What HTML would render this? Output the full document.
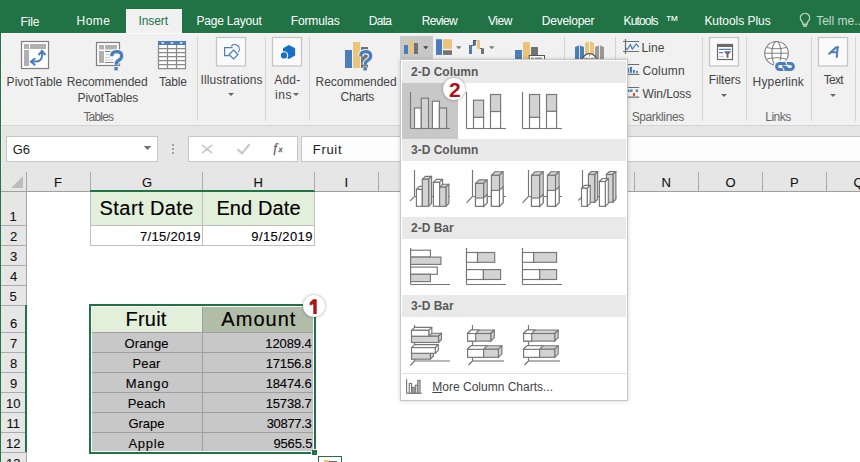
<!DOCTYPE html>
<html><head><meta charset="utf-8">
<style>
*{margin:0;padding:0;box-sizing:border-box}
html,body{width:860px;height:462px;overflow:hidden;background:#fff;font-family:"Liberation Sans",sans-serif}
.a{position:absolute}
.t{position:absolute;white-space:nowrap;line-height:1}
.tab{position:absolute;color:#fff;font-size:12px;white-space:nowrap;line-height:12px}
.rl{position:absolute;color:#444;font-size:12px;white-space:nowrap;line-height:12px}
.gl{position:absolute;color:#666;font-size:12px;white-space:nowrap;line-height:12px}
.sep{position:absolute;width:1px;background:#d4d4d4;top:37px;height:84px}
.hl{font-size:13px;color:#222;text-align:center}
.rl2{font-size:13px;color:#222;text-align:center}
.dd{position:absolute;font-weight:bold;font-size:12px;color:#555;line-height:12px;white-space:nowrap}
.band{position:absolute;left:402px;width:224px;height:22px;background:#e9e9e9}
svg{position:absolute;overflow:visible}
</style></head><body>
<div class="a" style="left:0;top:0;width:860px;height:33px;background:#217346"></div>
<div class="a" style="left:126px;top:9px;width:56px;height:24px;background:#f1f1f1"></div>
<div class="t" style="left:20.50px;top:16px;font-size:12px;color:#fff;letter-spacing:-0.100px">File</div>
<div class="t" style="left:76.50px;top:15px;font-size:12px;color:#fff;letter-spacing:0.500px">Home</div>
<div class="t" style="left:138.40px;top:15px;font-size:12px;color:#217346;letter-spacing:-0.080px">Insert</div>
<div class="t" style="left:196.50px;top:15px;font-size:12px;color:#fff;letter-spacing:-0.200px">Page Layout</div>
<div class="t" style="left:290.80px;top:15px;font-size:12px;color:#fff;letter-spacing:-0.143px">Formulas</div>
<div class="t" style="left:368.80px;top:15px;font-size:12px;color:#fff;letter-spacing:-0.700px">Data</div>
<div class="t" style="left:421.80px;top:15px;font-size:12px;color:#fff;letter-spacing:-0.680px">Review</div>
<div class="t" style="left:488.00px;top:15px;font-size:12px;color:#fff;letter-spacing:-0.467px">View</div>
<div class="t" style="left:541.80px;top:15px;font-size:12px;color:#fff;letter-spacing:-0.250px">Developer</div>
<div class="t" style="left:623.50px;top:15px;font-size:12px;color:#fff;letter-spacing:-0.833px">Kutools</div>
<div class="t" style="left:704.40px;top:15px;font-size:12px;color:#fff;letter-spacing:-0.036px">Kutools Plus</div>
<div class="t" style="left:665.40px;top:14px;font-size:13px;color:#fff;transform:scaleX(1.0);transform-origin:left">&#8482;</div>
<div class="t" style="left:816.20px;top:15px;font-size:12px;color:#c3d9c9">Tell me...</div>
<svg style="left:798px;top:12px" width="14" height="16"><path d="M5 12.2 Q4.8 10.2 3.4 8.8 A4.6 4.6 0 1 1 10.6 8.8 Q9.2 10.2 9 12.2Z" fill="none" stroke="#bcd2c2" stroke-width="1.4"/><rect x="5" y="13.2" width="4" height="1.6" fill="#bcd2c2"/></svg>
<div class="a" style="left:0;top:33px;width:860px;height:93px;background:#f1f1f1;border-bottom:1px solid #d5d5d5"></div>
<div class="sep" style="left:197px"></div>
<div class="sep" style="left:265px"></div>
<div class="sep" style="left:309px"></div>
<div class="sep" style="left:564px"></div>
<div class="sep" style="left:615px"></div>
<div class="sep" style="left:702px"></div>
<div class="sep" style="left:746px"></div>
<div class="sep" style="left:811px"></div>
<div class="sep" style="left:855px"></div>
<div class="t" style="left:6.60px;top:76px;font-size:12px;color:#444;letter-spacing:0.033px">PivotTable</div>
<div class="t" style="left:66.70px;top:76px;font-size:12px;color:#444;letter-spacing:-0.040px">Recommended</div>
<div class="t" style="left:77.50px;top:92px;font-size:12px;color:#444;letter-spacing:-0.050px">PivotTables</div>
<div class="t" style="left:159.00px;top:76px;font-size:12px;color:#444;letter-spacing:-0.200px">Table</div>
<div class="t" style="left:83.40px;top:111px;font-size:12px;color:#666;letter-spacing:-0.800px">Tables</div>
<div class="t" style="left:200.60px;top:74px;font-size:12px;color:#444;letter-spacing:0.100px">Illustrations</div>
<div class="t" style="left:274.20px;top:74px;font-size:12px;color:#444;letter-spacing:0.200px">Add-</div>
<div class="t" style="left:275.10px;top:89px;font-size:12px;color:#444;letter-spacing:0.500px">ins</div>
<div class="t" style="left:315.50px;top:76px;font-size:12px;color:#444;letter-spacing:-0.020px">Recommended</div>
<div class="t" style="left:340.60px;top:91px;font-size:12px;color:#444;letter-spacing:-0.360px">Charts</div>
<div class="t" style="left:641.50px;top:42px;font-size:12px;color:#444;letter-spacing:0.067px">Line</div>
<div class="t" style="left:642.50px;top:65px;font-size:12px;color:#444;letter-spacing:0.140px">Column</div>
<div class="t" style="left:642.50px;top:88px;font-size:12px;color:#444;letter-spacing:-0.086px">Win/Loss</div>
<div class="t" style="left:631.70px;top:111px;font-size:12px;color:#666;letter-spacing:-0.389px">Sparklines</div>
<div class="t" style="left:708.70px;top:74px;font-size:12px;color:#444;letter-spacing:-0.117px">Filters</div>
<div class="t" style="left:752.60px;top:76px;font-size:12px;color:#444;letter-spacing:0.150px">Hyperlink</div>
<div class="t" style="left:765.20px;top:111px;font-size:12px;color:#666;letter-spacing:-0.475px">Links</div>
<div class="t" style="left:823.70px;top:74px;font-size:12px;color:#444;letter-spacing:-0.700px">Text</div>
<svg style="left:228px;top:93px" width="6" height="3"><path d="M0 0H6L3 3Z" fill="#666"/></svg>
<svg style="left:293px;top:93px" width="6" height="3"><path d="M0 0H6L3 3Z" fill="#666"/></svg>
<svg style="left:721px;top:94px" width="6" height="3"><path d="M0 0H6L3 3Z" fill="#666"/></svg>
<svg style="left:830px;top:94px" width="6" height="3"><path d="M0 0H6L3 3Z" fill="#666"/></svg>
<div class="a" style="left:400px;top:36px;width:33px;height:25px;background:#c8c8c8"></div>
<svg style="left:0;top:0" width="860" height="462"><rect x="21.5" y="41.5" width="27" height="27" fill="#fff" stroke="#7f7f7f" stroke-width="1.2"/><rect x="24" y="44" width="5" height="5" fill="#b0b0b0"/><rect x="30" y="44" width="16" height="5" fill="#b0b0b0"/><rect x="24" y="50" width="5" height="16" fill="#b0b0b0"/><path d="M31 61.6 H36 A6 5.6 0 0 0 42 56 V51" fill="none" stroke="#4a7ebb" stroke-width="2"/><path d="M35.2 58.2 L31 61.7 L35.2 65.2" fill="none" stroke="#4a7ebb" stroke-width="2"/><path d="M38.5 55.2 L42 50.8 L45.5 55.2" fill="none" stroke="#4a7ebb" stroke-width="2"/><rect x="96.5" y="42.5" width="23" height="23" fill="#fff" stroke="#7f7f7f" stroke-width="1.2"/><rect x="99" y="45" width="5" height="4.5" fill="#b0b0b0"/><rect x="105" y="45" width="12" height="4.5" fill="#b0b0b0"/><rect x="99" y="51" width="5" height="12" fill="#b0b0b0"/><path d="M105 51.5H111M105 62.5H114" stroke="#7f7f7f" stroke-width="1"/><path d="M105 54.5H110M105 57.5H110M105 60H113" stroke="#c8c8c8" stroke-width="1.2"/><path d="M111.69999999999999 56.300000000000004 Q111.69999999999999 51.6 116.69999999999999 51.6 Q121.69999999999999 51.6 121.69999999999999 55.900000000000006 Q121.69999999999999 58.7 118.5 60.5 Q116.19999999999999 61.800000000000004 116.19999999999999 64.7" fill="none" stroke="#f1f1f1" stroke-width="5.5"/><rect x="113.8" y="66.4" width="4.6" height="4.6" fill="#f1f1f1"/><path d="M111.69999999999999 56.300000000000004 Q111.69999999999999 51.6 116.69999999999999 51.6 Q121.69999999999999 51.6 121.69999999999999 55.900000000000006 Q121.69999999999999 58.7 118.5 60.5 Q116.19999999999999 61.800000000000004 116.19999999999999 64.7" fill="none" stroke="#4a7ebb" stroke-width="3.2"/><rect x="114.39999999999999" y="67.0" width="3.4" height="3.4" fill="#4a7ebb"/><rect x="158" y="44" width="28" height="25" fill="#fff"/><path d="M158.5 44V69M167.5 45V69M176.5 45V69M185.5 44V69M158 48.5H186M158 52.5H186M158 56.5H186M158 60.5H186M158 64.5H186M158 68.5H186" stroke="#8a8a8a" stroke-width="1.25"/><rect x="158" y="41" width="28" height="4" fill="#4a7ebb"/><path d="M161.0 42.3H164.60000000000002L162.8 44.2Z" fill="#fff"/><path d="M170.1 42.3H173.70000000000002L171.9 44.2Z" fill="#fff"/><path d="M179.29999999999998 42.3H182.9L181.1 44.2Z" fill="#fff"/><rect x="216.5" y="37.5" width="29" height="28.5" fill="#fafafa" stroke="#c6c6c6" stroke-width="1.3"/><path d="M232.6 47.6H224.6V55.6H229" fill="none" stroke="#4a7ebb" stroke-width="1.2"/><path d="M231.2 46.2 A4.6 4.6 0 1 1 238.2 52.2" fill="none" stroke="#4a7ebb" stroke-width="1.2"/><path d="M233.5 50 L238 54.5 L233.5 59 L229 54.5Z" fill="none" stroke="#4a7ebb" stroke-width="1.2"/><rect x="272.5" y="37.5" width="29" height="28.5" fill="#fafafa" stroke="#c6c6c6" stroke-width="1.3"/><path d="M288.9 44.9 L295.1 48.2 V55.6 L288.9 58.9 L283 56 V48.2Z" fill="#1a6fc9"/><circle cx="284" cy="55.4" r="4.2" fill="#fafafa"/><circle cx="284" cy="55.4" r="3.1" fill="#1a6fc9"/><rect x="345" y="50" width="7" height="18" fill="#4a7ebb"/><rect x="353" y="42" width="7" height="26" fill="#eac47a"/><rect x="361" y="47" width="7" height="21" fill="#737373"/><path d="M360.70000000000005 56.4 Q360.70000000000005 51.699999999999996 365.70000000000005 51.699999999999996 Q370.70000000000005 51.699999999999996 370.70000000000005 56.0 Q370.70000000000005 58.8 367.5 60.599999999999994 Q365.20000000000005 61.9 365.20000000000005 64.8" fill="none" stroke="#f1f1f1" stroke-width="5.5"/><rect x="362.8" y="66.5" width="4.6" height="4.6" fill="#f1f1f1"/><path d="M360.70000000000005 56.4 Q360.70000000000005 51.699999999999996 365.70000000000005 51.699999999999996 Q370.70000000000005 51.699999999999996 370.70000000000005 56.0 Q370.70000000000005 58.8 367.5 60.599999999999994 Q365.20000000000005 61.9 365.20000000000005 64.8" fill="none" stroke="#4a7ebb" stroke-width="3.2"/><rect x="363.40000000000003" y="67.1" width="3.4" height="3.4" fill="#4a7ebb"/><rect x="404" y="45" width="4" height="9" fill="#4a7ebb"/><rect x="409" y="40" width="4" height="14" fill="#eac47a"/><rect x="414" y="43" width="4" height="11" fill="#737373"/><path d="M423 46.3H428.5L425.75 49.2Z" fill="#444"/><rect x="436" y="39.2" width="6" height="15.7" fill="#4a7ebb"/><rect x="443" y="39.2" width="9" height="9.7" fill="#eac47a"/><rect x="443" y="50.3" width="9" height="4.6" fill="#737373"/><path d="M456 46.3H461.5L458.75 49.2Z" fill="#777"/><rect x="469" y="45" width="3" height="9" fill="#4a7ebb"/><rect x="473" y="40" width="3" height="5.6" fill="#4a7ebb"/><rect x="477" y="40" width="3" height="8.9" fill="#eac47a"/><rect x="481" y="48.2" width="3" height="5.8" fill="#737373"/><path d="M471.5 45.5H473.5V40.5H476.5M480 48.5H481.5" fill="none" stroke="#444" stroke-width="0.8"/><path d="M489 46.3H494.5L491.75 49.2Z" fill="#777"/><rect x="515" y="50" width="7" height="10" fill="#4a7ebb"/><rect x="523" y="42" width="7" height="18" fill="#eac47a"/><rect x="531" y="47" width="7" height="8" fill="#737373"/><rect x="529.2" y="55.5" width="15.3" height="6" fill="#fff" stroke="#555" stroke-width="1"/><rect x="531" y="57.5" width="3" height="2" fill="#999"/><rect x="535" y="57.5" width="7" height="2" fill="#999"/><path d="M575 47L579.5 45.2L584 47V60H575Z" fill="#4a7ebb"/><path d="M579.5 45.2V60" stroke="#fff" stroke-width="0.8"/><path d="M585 43L589.5 41L594 43V60H585Z" fill="#eac47a"/><path d="M589.5 41V60" stroke="#fff" stroke-width="0.8"/><path d="M595 47L599.5 45.2L604 47V60H595Z" fill="#999"/><path d="M599.5 45.2V60" stroke="#fff" stroke-width="0.8"/><path d="M582 61.5A7.5 7.8 0 0 1 597 61.5" fill="#fff" stroke="#555" stroke-width="1.3"/><path d="M584 58.3H595M589.5 54.5V61" stroke="#777" stroke-width="0.9"/><path d="M587.8 58.2L589.5 56.2L591.2 58.2Z" fill="#fff"/><path d="M625.5 39V54M623 41.5H639M623 51.5H639" stroke="#6e6e6e" stroke-width="1.2"/><path d="M626 47.8L627.3 49.5L630.4 44.5L632.3 49L636.3 44L638.8 47.2" fill="none" stroke="#4a7ebb" stroke-width="1.2"/><path d="M627 64.5H639.2M627 74.3H639.2" stroke="#6e6e6e" stroke-width="1.2"/><rect x="627.9" y="68" width="1.2" height="4.8" fill="#4a7ebb"/><rect x="629.9" y="66.9" width="2.2" height="5.9" fill="#4a7ebb"/><rect x="633" y="70" width="2" height="2.8" fill="#4a7ebb"/><rect x="636" y="71" width="2" height="1.8" fill="#4a7ebb"/><path d="M627 87.5H639.2M627 97.2H639.2" stroke="#6e6e6e" stroke-width="1.2"/><rect x="627.5" y="89.5" width="2" height="2.5" fill="#4a7ebb"/><rect x="630.2" y="89.5" width="2.3" height="2.5" fill="#4a7ebb"/><rect x="635.8" y="89.5" width="2.2" height="2.5" fill="#4a7ebb"/><rect x="633" y="93" width="2" height="3" fill="#d9472b"/><rect x="709.5" y="37.5" width="29" height="28.5" fill="#fafafa" stroke="#c6c6c6" stroke-width="1.3"/><rect x="717.5" y="44.5" width="15" height="15" fill="#fff" stroke="#6b6b6b" stroke-width="1.2"/><rect x="717" y="44" width="16" height="3" fill="#6b6b6b"/><path d="M719 49.3H731M719 52.7H723" stroke="#4a7ebb" stroke-width="1.3"/><path d="M719 56.5H724" stroke="#b8cde6" stroke-width="1.3"/><path d="M723.8 51.2H731.2L728.5 54.5V57.8H726.5V54.5Z" fill="#6b6b6b"/><circle cx="776.5" cy="53.3" r="11.8" fill="#fff" stroke="#808080" stroke-width="1.1"/><ellipse cx="776.5" cy="53.3" rx="4.6" ry="11.8" fill="none" stroke="#808080" stroke-width="1.1"/><path d="M765 53.3H788M767 47.5Q776.5 50 786 47.5M767 59Q776.5 56.5 786 59" fill="none" stroke="#808080" stroke-width="1.1"/><rect x="773.5" y="60.5" width="23" height="12" rx="6" fill="#f1f1f1"/><rect x="776.6" y="63.5" width="16.8" height="6" rx="3" fill="none" stroke="#4a7ebb" stroke-width="3"/><path d="M785.3 61.5L787.8 65.8M782.2 67.2L784.7 71.5" stroke="#f1f1f1" stroke-width="1.1"/><path d="M782.3 66.2L787.7 67.8" stroke="#4a7ebb" stroke-width="2.4"/><rect x="818.5" y="37.5" width="29" height="28.5" fill="#fafafa" stroke="#c6c6c6" stroke-width="1.3"/><path d="M829.2 53.8 L836.2 47.2 H838.2 M837.6 47.4 L836.8 57 M831.6 52.3 H836.9" fill="none" stroke="#4a7ebb" stroke-width="2" stroke-linecap="round" stroke-linejoin="round"/></svg>
<div class="a" style="left:1px;top:126px;width:859px;height:46px;background:#e6e6e6"></div>
<div class="a" style="left:6px;top:136px;width:152px;height:26px;background:#fff;border:1px solid #c6c6c6"></div>
<div class="t" style="left:12.70px;top:143px;font-size:13px;color:#222">G6</div>
<svg style="left:0;top:0" width="860" height="462"><path d="M143.8 146H151.2L147.5 150Z" fill="#707070"/><rect x="172" y="144" width="2" height="2" fill="#a3a3a3"/><rect x="172" y="148" width="2" height="2" fill="#a3a3a3"/><rect x="172" y="152" width="2" height="2" fill="#a3a3a3"/></svg>
<div class="a" style="left:188px;top:136px;width:110px;height:26px;background:#fff;border:1px solid #c6c6c6"></div>
<svg style="left:0;top:0" width="860" height="462"><path d="M202.5 145.3L211.6 152.7M211.6 145.3L202.5 152.7" stroke="#c8c8c8" stroke-width="1.7" stroke-linecap="round"/><path d="M238.2 149.8L242 153.4L249 145" stroke="#c8c8c8" stroke-width="2.2" fill="none" stroke-linecap="round" stroke-linejoin="round"/></svg>
<div class="t" style="left:273.60px;top:142px;font-size:12px;color:#5a5a5a;font-family:'Liberation Serif';font-style:italic;-webkit-text-stroke:0.3px #5a5a5a">f</div>
<div class="t" style="left:278.40px;top:145px;font-size:9px;color:#5a5a5a;font-family:'Liberation Serif';font-style:italic;-webkit-text-stroke:0.3px #5a5a5a">x</div>
<div class="a" style="left:301px;top:136px;width:580px;height:26px;background:#fdfdfd;border:1px solid #c6c6c6"></div>
<div class="t" style="left:312.80px;top:143px;font-size:13px;color:#222;letter-spacing:0.675px">Fruit</div>
<div class="a" style="left:1px;top:172px;width:859px;height:20px;background:#e6e6e6;border-bottom:1px solid #a0a0a0"></div>
<svg style="left:11px;top:176px" width="13" height="12"><path d="M0 12L12 0V12Z" fill="#bdbdbd"/></svg>
<div class="a" style="left:26px;top:172px;width:1px;height:19px;background:#ababab"></div>
<div class="t" style="left:54.00px;top:176px;font-size:13px;color:#111;-webkit-text-stroke:0.1px #111">F</div>
<div class="a" style="left:90px;top:172px;width:1px;height:19px;background:#ababab"></div>
<div class="a" style="left:90px;top:190px;width:113px;height:2px;background:#217346"></div>
<div class="t" style="left:142.00px;top:176px;font-size:13px;color:#111;-webkit-text-stroke:0.1px #111">G</div>
<div class="a" style="left:202px;top:172px;width:1px;height:19px;background:#ababab"></div>
<div class="a" style="left:202px;top:190px;width:113px;height:2px;background:#217346"></div>
<div class="t" style="left:253.50px;top:176px;font-size:13px;color:#111;-webkit-text-stroke:0.1px #111">H</div>
<div class="a" style="left:314px;top:172px;width:1px;height:19px;background:#ababab"></div>
<div class="t" style="left:344.50px;top:176px;font-size:13px;color:#111;-webkit-text-stroke:0.1px #111">I</div>
<div class="a" style="left:378px;top:172px;width:1px;height:19px;background:#ababab"></div>
<div class="t" style="left:407.50px;top:176px;font-size:13px;color:#111;-webkit-text-stroke:0.1px #111">J</div>
<div class="a" style="left:442px;top:172px;width:1px;height:19px;background:#ababab"></div>
<div class="t" style="left:470.00px;top:176px;font-size:13px;color:#111;-webkit-text-stroke:0.1px #111">K</div>
<div class="a" style="left:506px;top:172px;width:1px;height:19px;background:#ababab"></div>
<div class="t" style="left:534.50px;top:176px;font-size:13px;color:#111;-webkit-text-stroke:0.1px #111">L</div>
<div class="a" style="left:570px;top:172px;width:1px;height:19px;background:#ababab"></div>
<div class="t" style="left:597.00px;top:176px;font-size:13px;color:#111;-webkit-text-stroke:0.1px #111">M</div>
<div class="a" style="left:634px;top:172px;width:1px;height:19px;background:#ababab"></div>
<div class="t" style="left:661.50px;top:176px;font-size:13px;color:#111;-webkit-text-stroke:0.1px #111">N</div>
<div class="a" style="left:698px;top:172px;width:1px;height:19px;background:#ababab"></div>
<div class="t" style="left:725.50px;top:176px;font-size:13px;color:#111;-webkit-text-stroke:0.1px #111">O</div>
<div class="a" style="left:762px;top:172px;width:1px;height:19px;background:#ababab"></div>
<div class="t" style="left:790.00px;top:176px;font-size:13px;color:#111;-webkit-text-stroke:0.1px #111">P</div>
<div class="a" style="left:826px;top:172px;width:1px;height:19px;background:#ababab"></div>
<div class="t" style="left:853.50px;top:176px;font-size:13px;color:#111;-webkit-text-stroke:0.1px #111">Q</div>
<div class="a" style="left:1px;top:192px;width:25px;height:34px;background:#e6e6e6;border-bottom:1px solid #ababab"></div>
<div class="t" style="left:9.60px;top:210px;font-size:13px;color:#111;-webkit-text-stroke:0.1px #111">1</div>
<div class="a" style="left:1px;top:226px;width:25px;height:20px;background:#e6e6e6;border-bottom:1px solid #ababab"></div>
<div class="t" style="left:10.10px;top:230px;font-size:13px;color:#111;-webkit-text-stroke:0.1px #111">2</div>
<div class="a" style="left:1px;top:246px;width:25px;height:20px;background:#e6e6e6;border-bottom:1px solid #ababab"></div>
<div class="t" style="left:10.10px;top:250px;font-size:13px;color:#111;-webkit-text-stroke:0.1px #111">3</div>
<div class="a" style="left:1px;top:266px;width:25px;height:20px;background:#e6e6e6;border-bottom:1px solid #ababab"></div>
<div class="t" style="left:10.10px;top:270px;font-size:13px;color:#111;-webkit-text-stroke:0.1px #111">4</div>
<div class="a" style="left:1px;top:286px;width:25px;height:20px;background:#e6e6e6;border-bottom:1px solid #ababab"></div>
<div class="t" style="left:9.60px;top:290px;font-size:13px;color:#111;-webkit-text-stroke:0.1px #111">5</div>
<div class="a" style="left:1px;top:306px;width:25px;height:27px;background:#e6e6e6;border-bottom:1px solid #ababab"></div>
<div class="t" style="left:10.10px;top:317px;font-size:13px;color:#111;-webkit-text-stroke:0.1px #111">6</div>
<div class="a" style="left:1px;top:333px;width:25px;height:20px;background:#e6e6e6;border-bottom:1px solid #ababab"></div>
<div class="t" style="left:10.10px;top:337px;font-size:13px;color:#111;-webkit-text-stroke:0.1px #111">7</div>
<div class="a" style="left:1px;top:353px;width:25px;height:20px;background:#e6e6e6;border-bottom:1px solid #ababab"></div>
<div class="t" style="left:10.10px;top:357px;font-size:13px;color:#111;-webkit-text-stroke:0.1px #111">8</div>
<div class="a" style="left:1px;top:373px;width:25px;height:20px;background:#e6e6e6;border-bottom:1px solid #ababab"></div>
<div class="t" style="left:10.10px;top:377px;font-size:13px;color:#111;-webkit-text-stroke:0.1px #111">9</div>
<div class="a" style="left:1px;top:393px;width:25px;height:20px;background:#e6e6e6;border-bottom:1px solid #ababab"></div>
<div class="t" style="left:6.10px;top:397px;font-size:13px;color:#111;-webkit-text-stroke:0.1px #111">10</div>
<div class="a" style="left:1px;top:413px;width:25px;height:20px;background:#e6e6e6;border-bottom:1px solid #ababab"></div>
<div class="t" style="left:6.60px;top:417px;font-size:13px;color:#111;-webkit-text-stroke:0.1px #111">11</div>
<div class="a" style="left:1px;top:433px;width:25px;height:20px;background:#e6e6e6;border-bottom:1px solid #ababab"></div>
<div class="t" style="left:6.10px;top:437px;font-size:13px;color:#111;-webkit-text-stroke:0.1px #111">12</div>
<div class="a" style="left:1px;top:453px;width:25px;height:20px;background:#e6e6e6;border-bottom:1px solid #ababab"></div>
<div class="t" style="left:6.10px;top:457px;font-size:13px;color:#111;-webkit-text-stroke:0.1px #111">13</div>
<div class="a" style="left:26px;top:172px;width:1px;height:290px;background:#a6a6a6"></div>
<div class="a" style="left:25px;top:305px;width:2px;height:147px;background:#217346"></div>
<div class="a" style="left:90px;top:192px;width:225px;height:54px;border:1px solid #bfbfbf;background:#fff"></div>
<div class="a" style="left:91px;top:192px;width:223px;height:33px;background:#e2efda"></div>
<div class="a" style="left:91px;top:225px;width:223px;height:1px;background:#bfbfbf"></div>
<div class="a" style="left:202px;top:192px;width:1px;height:53px;background:#bfbfbf"></div>
<div class="t" style="left:99.60px;top:198px;font-size:20px;color:#000;letter-spacing:0.422px;-webkit-text-stroke:0.15px #000">Start Date</div>
<div class="t" style="left:216.40px;top:198px;font-size:20px;color:#000;letter-spacing:0.114px;-webkit-text-stroke:0.15px #000">End Date</div>
<div class="t" style="left:139.90px;top:230px;font-size:13px;color:#000;letter-spacing:0.337px;-webkit-text-stroke:0.1px #000">7/15/2019</div>
<div class="t" style="left:251.30px;top:230px;font-size:13px;color:#000;letter-spacing:0.413px;-webkit-text-stroke:0.1px #000">9/15/2019</div>
<div class="a" style="left:91px;top:306px;width:223px;height:146px;background:#fff"></div>
<div class="a" style="left:92px;top:307px;width:221px;height:144px;background:#c8c8c8"></div>
<div class="a" style="left:92px;top:307px;width:110px;height:25px;background:#e2efda"></div>
<div class="a" style="left:203px;top:307px;width:110px;height:25px;background:#b1bca9"></div>
<div class="a" style="left:92px;top:332px;width:221px;height:1px;background:#9e9e9e"></div>
<div class="a" style="left:92px;top:352px;width:221px;height:1px;background:#9e9e9e"></div>
<div class="a" style="left:92px;top:372px;width:221px;height:1px;background:#9e9e9e"></div>
<div class="a" style="left:92px;top:392px;width:221px;height:1px;background:#9e9e9e"></div>
<div class="a" style="left:92px;top:412px;width:221px;height:1px;background:#9e9e9e"></div>
<div class="a" style="left:92px;top:432px;width:221px;height:1px;background:#9e9e9e"></div>
<div class="a" style="left:202px;top:307px;width:1px;height:144px;background:#9e9e9e"></div>
<div class="a" style="left:89px;top:304px;width:227px;height:2px;background:#217346"></div>
<div class="a" style="left:89px;top:304px;width:2px;height:150px;background:#217346"></div>
<div class="a" style="left:314px;top:304px;width:2px;height:145px;background:#217346"></div>
<div class="a" style="left:89px;top:452px;width:222px;height:2px;background:#217346"></div>
<div class="a" style="left:312px;top:450px;width:5px;height:5px;background:#217346"></div>
<div class="a" style="left:318px;top:456px;width:24px;height:20px;background:#fff;border:1px solid #217346"></div>
<div class="a" style="left:324px;top:460px;width:5px;height:3px;background:#eac47a"></div>
<div class="a" style="left:329px;top:461px;width:8px;height:2px;background:#666"></div>
<div class="t" style="left:125.60px;top:309px;font-size:20px;color:#000;letter-spacing:0.200px;-webkit-text-stroke:0.15px #000">Fruit</div>
<div class="t" style="left:221.30px;top:309px;font-size:20px;color:#000;letter-spacing:1.040px;-webkit-text-stroke:0.15px #000">Amount</div>
<div class="t" style="left:124.50px;top:337px;font-size:13px;color:#000;letter-spacing:0.140px;-webkit-text-stroke:0.1px #000">Orange</div>
<div class="t" style="left:265.30px;top:337px;font-size:13px;color:#000;letter-spacing:-0.100px;-webkit-text-stroke:0.1px #000">12089.4</div>
<div class="t" style="left:132.60px;top:357px;font-size:13px;color:#000;letter-spacing:0.100px;-webkit-text-stroke:0.1px #000">Pear</div>
<div class="t" style="left:265.70px;top:357px;font-size:13px;color:#000;letter-spacing:-0.167px;-webkit-text-stroke:0.1px #000">17156.8</div>
<div class="t" style="left:125.70px;top:377px;font-size:13px;color:#000;letter-spacing:0.775px;-webkit-text-stroke:0.1px #000">Mango</div>
<div class="t" style="left:265.70px;top:377px;font-size:13px;color:#000;letter-spacing:-0.167px;-webkit-text-stroke:0.1px #000">18474.6</div>
<div class="t" style="left:127.80px;top:397px;font-size:13px;color:#000;letter-spacing:0.125px;-webkit-text-stroke:0.1px #000">Peach</div>
<div class="t" style="left:265.70px;top:397px;font-size:13px;color:#000;letter-spacing:-0.167px;-webkit-text-stroke:0.1px #000">15738.7</div>
<div class="t" style="left:128.40px;top:417px;font-size:13px;color:#000;letter-spacing:-0.025px;-webkit-text-stroke:0.1px #000">Grape</div>
<div class="t" style="left:266.70px;top:417px;font-size:13px;color:#000;letter-spacing:-0.333px;-webkit-text-stroke:0.1px #000">30877.3</div>
<div class="t" style="left:128.40px;top:437px;font-size:13px;color:#000;letter-spacing:0.725px;-webkit-text-stroke:0.1px #000">Apple</div>
<div class="t" style="left:273.40px;top:437px;font-size:13px;color:#000;letter-spacing:-0.140px;-webkit-text-stroke:0.1px #000">9565.5</div>
<div class="a" style="left:303.1px;top:294.8px;width:22px;height:22px;border-radius:50%;background:#fff;box-shadow:0 0 2.5px 0.5px rgba(0,0,0,.28)"></div>
<svg style="left:0;top:0" width="860" height="462"><path d="M313.3 299.3H316.7V313.9H313.3V304.2L309.7 305.6V302.4Z" fill="#ad1414"/></svg>
<div class="a" style="left:400px;top:59px;width:228px;height:342px;background:#fff;border:1px solid #c6c6c6;box-shadow:0 0 4px rgba(0,0,0,.18)"></div>
<div class="band" style="top:61px"></div>
<div class="t" style="left:411.00px;top:66px;font-size:12px;color:#5a5a5a;font-weight:bold">2-D Column</div>
<div class="band" style="top:139px"></div>
<div class="t" style="left:411.00px;top:144px;font-size:12px;color:#5a5a5a;font-weight:bold">3-D Column</div>
<div class="band" style="top:217px"></div>
<div class="t" style="left:411.00px;top:222px;font-size:12px;color:#5a5a5a;font-weight:bold">2-D Bar</div>
<div class="band" style="top:295px"></div>
<div class="t" style="left:411.00px;top:300px;font-size:12px;color:#5a5a5a;font-weight:bold">3-D Bar</div>
<div class="a" style="left:402px;top:83px;width:56px;height:56px;background:#c8c8c8"></div>
<div class="a" style="left:402px;top:373px;width:224px;height:1px;background:#e1e1e1"></div>
<div class="t" style="left:432.30px;top:381px;font-size:12px;color:#444"><u>M</u>ore Column Charts...</div>
<svg style="left:0;top:0" width="860" height="462"><line x1="410.5" y1="92" x2="410.5" y2="128.5" stroke="#767676" stroke-width="1.15"/><line x1="410.5" y1="128.5" x2="450" y2="128.5" stroke="#767676" stroke-width="1.15"/><rect x="414.5" y="108" width="6.800000000000011" height="20.5" fill="#fff" stroke="#767676" stroke-width="1.15"/><rect x="421.3" y="98.2" width="7.199999999999989" height="30.299999999999997" fill="#d3d3d3" stroke="#767676" stroke-width="1.15"/><rect x="432.4" y="101.2" width="7.0" height="27.299999999999997" fill="#fff" stroke="#767676" stroke-width="1.15"/><rect x="439.4" y="108" width="7.2000000000000455" height="20.5" fill="#d3d3d3" stroke="#767676" stroke-width="1.15"/><line x1="466.5" y1="92" x2="466.5" y2="128.5" stroke="#767676" stroke-width="1.15"/><line x1="466.5" y1="128.5" x2="506" y2="128.5" stroke="#767676" stroke-width="1.15"/><rect x="473.5" y="117.3" width="10.100000000000023" height="11.200000000000003" fill="#fff" stroke="#767676" stroke-width="1.15"/><rect x="473.5" y="100.2" width="10.100000000000023" height="17.099999999999994" fill="#d3d3d3" stroke="#767676" stroke-width="1.15"/><rect x="490.5" y="111.5" width="10.100000000000023" height="17.0" fill="#fff" stroke="#767676" stroke-width="1.15"/><rect x="490.5" y="94.5" width="10.100000000000023" height="17.0" fill="#d3d3d3" stroke="#767676" stroke-width="1.15"/><line x1="522.5" y1="92" x2="522.5" y2="128.5" stroke="#767676" stroke-width="1.15"/><line x1="522.5" y1="128.5" x2="562" y2="128.5" stroke="#767676" stroke-width="1.15"/><rect x="529.5" y="117.3" width="10.100000000000023" height="11.200000000000003" fill="#fff" stroke="#767676" stroke-width="1.15"/><rect x="529.5" y="94.5" width="10.100000000000023" height="22.799999999999997" fill="#d3d3d3" stroke="#767676" stroke-width="1.15"/><rect x="546.5" y="111.2" width="10.100000000000023" height="17.299999999999997" fill="#fff" stroke="#767676" stroke-width="1.15"/><rect x="546.5" y="94.5" width="10.100000000000023" height="16.700000000000003" fill="#d3d3d3" stroke="#767676" stroke-width="1.15"/><line x1="414.5" y1="170" x2="414.5" y2="196.5" stroke="#767676" stroke-width="1.15"/><line x1="410" y1="200.8" x2="414.5" y2="196.5" stroke="#767676" stroke-width="1.15"/><line x1="414.5" y1="196.5" x2="450" y2="196.5" stroke="#767676" stroke-width="1.15"/><polygon points="416.4,189.4 419.4,186.4 425.3,186.4 422.3,189.4" fill="#fff" stroke="#767676" stroke-width="1.15" stroke-linejoin="round"/><polygon points="422.3,189.4 425.3,186.4 425.3,203.3 422.3,206.3" fill="#fff" stroke="#767676" stroke-width="1.15" stroke-linejoin="round"/><rect x="416.4" y="189.4" width="5.900000000000034" height="16.900000000000006" fill="#fff" stroke="#767676" stroke-width="1.15"/><polygon points="422.3,179.3 425.3,176.3 431.6,176.3 428.6,179.3" fill="#d3d3d3" stroke="#767676" stroke-width="1.15" stroke-linejoin="round"/><polygon points="428.6,179.3 431.6,176.3 431.6,203.3 428.6,206.3" fill="#d3d3d3" stroke="#767676" stroke-width="1.15" stroke-linejoin="round"/><rect x="422.3" y="179.3" width="6.300000000000011" height="27.0" fill="#d3d3d3" stroke="#767676" stroke-width="1.15"/><polygon points="433.4,182.3 436.4,179.3 442.6,179.3 439.6,182.3" fill="#fff" stroke="#767676" stroke-width="1.15" stroke-linejoin="round"/><polygon points="439.6,182.3 442.6,179.3 442.6,203.3 439.6,206.3" fill="#fff" stroke="#767676" stroke-width="1.15" stroke-linejoin="round"/><rect x="433.4" y="182.3" width="6.2000000000000455" height="24.0" fill="#fff" stroke="#767676" stroke-width="1.15"/><polygon points="439.6,187.2 442.6,184.2 448.9,184.2 445.9,187.2" fill="#d3d3d3" stroke="#767676" stroke-width="1.15" stroke-linejoin="round"/><polygon points="445.9,187.2 448.9,184.2 448.9,203.3 445.9,206.3" fill="#d3d3d3" stroke="#767676" stroke-width="1.15" stroke-linejoin="round"/><rect x="439.6" y="187.2" width="6.2999999999999545" height="19.100000000000023" fill="#d3d3d3" stroke="#767676" stroke-width="1.15"/><line x1="472.5" y1="170" x2="472.5" y2="196.5" stroke="#767676" stroke-width="1.15"/><line x1="466.3" y1="202.9" x2="472.5" y2="196.5" stroke="#767676" stroke-width="1.15"/><line x1="472.5" y1="196.5" x2="506" y2="196.5" stroke="#767676" stroke-width="1.15"/><polygon points="475.5,183.4 479.1,179.8 487.20000000000005,179.8 483.6,183.4" fill="#d3d3d3" stroke="#767676" stroke-width="1.15" stroke-linejoin="round"/><polygon points="483.6,183.4 487.20000000000005,179.8 487.20000000000005,202.70000000000002 483.6,206.3" fill="#d3d3d3" stroke="#767676" stroke-width="1.15" stroke-linejoin="round"/><rect x="475.5" y="183.4" width="8.100000000000023" height="22.900000000000006" fill="#d3d3d3" stroke="#767676" stroke-width="1.15"/><rect x="475.5" y="198" width="8.100000000000023" height="8.300000000000011" fill="#fff" stroke="#767676" stroke-width="1.15"/><polygon points="483.6,198 487.2,194.4 487.2,202.7 483.6,206.3" fill="#fff" stroke="#767676" stroke-width="1.15"/><polygon points="491.4,175.3 495.0,171.70000000000002 503.1,171.70000000000002 499.5,175.3" fill="#d3d3d3" stroke="#767676" stroke-width="1.15" stroke-linejoin="round"/><polygon points="499.5,175.3 503.1,171.70000000000002 503.1,202.70000000000002 499.5,206.3" fill="#d3d3d3" stroke="#767676" stroke-width="1.15" stroke-linejoin="round"/><rect x="491.4" y="175.3" width="8.100000000000023" height="31.0" fill="#d3d3d3" stroke="#767676" stroke-width="1.15"/><rect x="491.4" y="190.4" width="8.100000000000023" height="15.900000000000006" fill="#fff" stroke="#767676" stroke-width="1.15"/><polygon points="499.5,190.4 503.1,186.8 503.1,202.7 499.5,206.3" fill="#fff" stroke="#767676" stroke-width="1.15"/><line x1="528.5" y1="170" x2="528.5" y2="196.5" stroke="#767676" stroke-width="1.15"/><line x1="522.3" y1="202.9" x2="528.5" y2="196.5" stroke="#767676" stroke-width="1.15"/><line x1="528.5" y1="196.5" x2="562" y2="196.5" stroke="#767676" stroke-width="1.15"/><polygon points="531.5,175.3 535.1,171.70000000000002 543.2,171.70000000000002 539.6,175.3" fill="#d3d3d3" stroke="#767676" stroke-width="1.15" stroke-linejoin="round"/><polygon points="539.6,175.3 543.2,171.70000000000002 543.2,202.70000000000002 539.6,206.3" fill="#d3d3d3" stroke="#767676" stroke-width="1.15" stroke-linejoin="round"/><rect x="531.5" y="175.3" width="8.100000000000023" height="31.0" fill="#d3d3d3" stroke="#767676" stroke-width="1.15"/><rect x="531.5" y="198" width="8.100000000000023" height="8.300000000000011" fill="#fff" stroke="#767676" stroke-width="1.15"/><polygon points="539.6,198 543.2,194.4 543.2,202.7 539.6,206.3" fill="#fff" stroke="#767676" stroke-width="1.15"/><polygon points="547.4,175.3 551.0,171.70000000000002 559.1,171.70000000000002 555.5,175.3" fill="#d3d3d3" stroke="#767676" stroke-width="1.15" stroke-linejoin="round"/><polygon points="555.5,175.3 559.1,171.70000000000002 559.1,202.70000000000002 555.5,206.3" fill="#d3d3d3" stroke="#767676" stroke-width="1.15" stroke-linejoin="round"/><rect x="547.4" y="175.3" width="8.100000000000023" height="31.0" fill="#d3d3d3" stroke="#767676" stroke-width="1.15"/><rect x="547.4" y="190.4" width="8.100000000000023" height="15.900000000000006" fill="#fff" stroke="#767676" stroke-width="1.15"/><polygon points="555.5,190.4 559.1,186.8 559.1,202.7 555.5,206.3" fill="#fff" stroke="#767676" stroke-width="1.15"/><line x1="582.5" y1="170" x2="582.5" y2="196.5" stroke="#767676" stroke-width="1.15"/><line x1="578.3" y1="200.5" x2="582.5" y2="196.5" stroke="#767676" stroke-width="1.15"/><line x1="582.5" y1="196.5" x2="617" y2="196.5" stroke="#767676" stroke-width="1.15"/><polygon points="588.4,174.5 591.4,171.5 597.7,171.5 594.7,174.5" fill="#d3d3d3" stroke="#767676" stroke-width="1.15" stroke-linejoin="round"/><polygon points="594.7,174.5 597.7,171.5 597.7,199.3 594.7,202.3" fill="#d3d3d3" stroke="#767676" stroke-width="1.15" stroke-linejoin="round"/><rect x="588.4" y="174.5" width="6.300000000000068" height="27.80000000000001" fill="#d3d3d3" stroke="#767676" stroke-width="1.15"/><polygon points="606.4,174.5 609.4,171.5 615.9,171.5 612.9,174.5" fill="#d3d3d3" stroke="#767676" stroke-width="1.15" stroke-linejoin="round"/><polygon points="612.9,174.5 615.9,171.5 615.9,199.3 612.9,202.3" fill="#d3d3d3" stroke="#767676" stroke-width="1.15" stroke-linejoin="round"/><rect x="606.4" y="174.5" width="6.5" height="27.80000000000001" fill="#d3d3d3" stroke="#767676" stroke-width="1.15"/><polygon points="581.5,188.3 584.5,185.3 590.2,185.3 587.2,188.3" fill="#fff" stroke="#767676" stroke-width="1.15" stroke-linejoin="round"/><polygon points="587.2,188.3 590.2,185.3 590.2,203.3 587.2,206.3" fill="#fff" stroke="#767676" stroke-width="1.15" stroke-linejoin="round"/><rect x="581.5" y="188.3" width="5.7000000000000455" height="18.0" fill="#fff" stroke="#767676" stroke-width="1.15"/><polygon points="599.4,181.5 602.4,178.5 608.3,178.5 605.3,181.5" fill="#fff" stroke="#767676" stroke-width="1.15" stroke-linejoin="round"/><polygon points="605.3,181.5 608.3,178.5 608.3,203.3 605.3,206.3" fill="#fff" stroke="#767676" stroke-width="1.15" stroke-linejoin="round"/><rect x="599.4" y="181.5" width="5.899999999999977" height="24.80000000000001" fill="#fff" stroke="#767676" stroke-width="1.15"/><line x1="410.6" y1="248" x2="410.6" y2="284.5" stroke="#767676" stroke-width="1.15"/><line x1="410.6" y1="284.5" x2="450" y2="284.5" stroke="#767676" stroke-width="1.15"/><rect x="410.6" y="250.2" width="19.799999999999955" height="6.900000000000034" fill="#fff" stroke="#767676" stroke-width="1.15"/><rect x="410.6" y="257.1" width="30.299999999999955" height="7.2999999999999545" fill="#d3d3d3" stroke="#767676" stroke-width="1.15"/><rect x="410.6" y="267.1" width="26.69999999999999" height="7.199999999999989" fill="#fff" stroke="#767676" stroke-width="1.15"/><rect x="410.6" y="274.3" width="19.799999999999955" height="7.300000000000011" fill="#d3d3d3" stroke="#767676" stroke-width="1.15"/><line x1="466.5" y1="248" x2="466.5" y2="284.5" stroke="#767676" stroke-width="1.15"/><line x1="466.5" y1="284.5" x2="506" y2="284.5" stroke="#767676" stroke-width="1.15"/><rect x="466.5" y="252.5" width="11.0" height="9.800000000000011" fill="#fff" stroke="#767676" stroke-width="1.15"/><rect x="477.5" y="252.5" width="17.19999999999999" height="9.800000000000011" fill="#d3d3d3" stroke="#767676" stroke-width="1.15"/><rect x="466.5" y="269.6" width="16.899999999999977" height="9.899999999999977" fill="#fff" stroke="#767676" stroke-width="1.15"/><rect x="483.4" y="269.6" width="17.200000000000045" height="9.899999999999977" fill="#d3d3d3" stroke="#767676" stroke-width="1.15"/><line x1="522.5" y1="248" x2="522.5" y2="284.5" stroke="#767676" stroke-width="1.15"/><line x1="522.5" y1="284.5" x2="562" y2="284.5" stroke="#767676" stroke-width="1.15"/><rect x="522.5" y="252.5" width="11.100000000000023" height="9.800000000000011" fill="#fff" stroke="#767676" stroke-width="1.15"/><rect x="533.6" y="252.5" width="23.0" height="9.800000000000011" fill="#d3d3d3" stroke="#767676" stroke-width="1.15"/><rect x="522.5" y="269.6" width="17.200000000000045" height="9.899999999999977" fill="#fff" stroke="#767676" stroke-width="1.15"/><rect x="539.7" y="269.6" width="16.899999999999977" height="9.899999999999977" fill="#d3d3d3" stroke="#767676" stroke-width="1.15"/><line x1="414.5" y1="325" x2="414.5" y2="361" stroke="#767676" stroke-width="1.15"/><line x1="410.2" y1="365.5" x2="414.5" y2="361" stroke="#767676" stroke-width="1.15"/><line x1="414.5" y1="361" x2="450" y2="361" stroke="#767676" stroke-width="1.15"/><polygon points="411.5,336.2 414.5,333.2 441.5,333.2 438.5,336.2" fill="#d3d3d3" stroke="#767676" stroke-width="1.15" stroke-linejoin="round"/><polygon points="438.5,336.2 441.5,333.2 441.5,339.5 438.5,342.5" fill="#d3d3d3" stroke="#767676" stroke-width="1.15" stroke-linejoin="round"/><rect x="411.5" y="336.2" width="27.0" height="6.300000000000011" fill="#d3d3d3" stroke="#767676" stroke-width="1.15"/><polygon points="411.5,330.3 414.5,327.3 431.8,327.3 428.8,330.3" fill="#fff" stroke="#767676" stroke-width="1.15" stroke-linejoin="round"/><polygon points="428.8,330.3 431.8,327.3 431.8,333.2 428.8,336.2" fill="#fff" stroke="#767676" stroke-width="1.15" stroke-linejoin="round"/><rect x="411.5" y="330.3" width="17.30000000000001" height="5.899999999999977" fill="#fff" stroke="#767676" stroke-width="1.15"/><polygon points="411.5,353.3 414.5,350.3 433.4,350.3 430.4,353.3" fill="#d3d3d3" stroke="#767676" stroke-width="1.15" stroke-linejoin="round"/><polygon points="430.4,353.3 433.4,350.3 433.4,356.2 430.4,359.2" fill="#d3d3d3" stroke="#767676" stroke-width="1.15" stroke-linejoin="round"/><rect x="411.5" y="353.3" width="18.899999999999977" height="5.899999999999977" fill="#d3d3d3" stroke="#767676" stroke-width="1.15"/><polygon points="411.5,347.6 414.5,344.6 438.3,344.6 435.3,347.6" fill="#fff" stroke="#767676" stroke-width="1.15" stroke-linejoin="round"/><polygon points="435.3,347.6 438.3,344.6 438.3,350.3 435.3,353.3" fill="#fff" stroke="#767676" stroke-width="1.15" stroke-linejoin="round"/><rect x="411.5" y="347.6" width="23.80000000000001" height="5.699999999999989" fill="#fff" stroke="#767676" stroke-width="1.15"/><line x1="472.5" y1="325" x2="472.5" y2="361" stroke="#767676" stroke-width="1.15"/><line x1="468.5" y1="365" x2="472.5" y2="361" stroke="#767676" stroke-width="1.15"/><line x1="472.5" y1="361" x2="504" y2="361" stroke="#767676" stroke-width="1.15"/><polygon points="467.6,333.5 471.1,330.0 494.3,330.0 490.8,333.5" fill="#d3d3d3" stroke="#767676" stroke-width="1.15" stroke-linejoin="round"/><polygon points="490.8,333.5 494.3,330.0 494.3,337.6 490.8,341.1" fill="#d3d3d3" stroke="#767676" stroke-width="1.15" stroke-linejoin="round"/><rect x="467.6" y="333.5" width="23.19999999999999" height="7.600000000000023" fill="#d3d3d3" stroke="#767676" stroke-width="1.15"/><rect x="467.6" y="333.5" width="8.099999999999966" height="7.600000000000023" fill="#fff" stroke="#767676" stroke-width="1.15"/><polygon points="467.6,333.5 471.1,330 479.2,330 475.7,333.5" fill="#fff" stroke="#767676" stroke-width="1.15"/><polygon points="467.6,349.2 471.1,345.7 501.9,345.7 498.4,349.2" fill="#d3d3d3" stroke="#767676" stroke-width="1.15" stroke-linejoin="round"/><polygon points="498.4,349.2 501.9,345.7 501.9,353.8 498.4,357.3" fill="#d3d3d3" stroke="#767676" stroke-width="1.15" stroke-linejoin="round"/><rect x="467.6" y="349.2" width="30.799999999999955" height="8.100000000000023" fill="#d3d3d3" stroke="#767676" stroke-width="1.15"/><rect x="467.6" y="349.2" width="16.0" height="8.100000000000023" fill="#fff" stroke="#767676" stroke-width="1.15"/><polygon points="467.6,349.2 471.1,345.7 487.1,345.7 483.6,349.2" fill="#fff" stroke="#767676" stroke-width="1.15"/><line x1="528.5" y1="325" x2="528.5" y2="361" stroke="#767676" stroke-width="1.15"/><line x1="524.5" y1="365" x2="528.5" y2="361" stroke="#767676" stroke-width="1.15"/><line x1="528.5" y1="361" x2="560" y2="361" stroke="#767676" stroke-width="1.15"/><polygon points="523.6,333.5 527.1,330.0 558.2,330.0 554.7,333.5" fill="#d3d3d3" stroke="#767676" stroke-width="1.15" stroke-linejoin="round"/><polygon points="554.7,333.5 558.2,330.0 558.2,337.6 554.7,341.1" fill="#d3d3d3" stroke="#767676" stroke-width="1.15" stroke-linejoin="round"/><rect x="523.6" y="333.5" width="31.100000000000023" height="7.600000000000023" fill="#d3d3d3" stroke="#767676" stroke-width="1.15"/><rect x="523.6" y="333.5" width="8.100000000000023" height="7.600000000000023" fill="#fff" stroke="#767676" stroke-width="1.15"/><polygon points="523.6,333.5 527.1,330 535.2,330 531.7,333.5" fill="#fff" stroke="#767676" stroke-width="1.15"/><polygon points="523.6,349.2 527.1,345.7 558.2,345.7 554.7,349.2" fill="#d3d3d3" stroke="#767676" stroke-width="1.15" stroke-linejoin="round"/><polygon points="554.7,349.2 558.2,345.7 558.2,353.8 554.7,357.3" fill="#d3d3d3" stroke="#767676" stroke-width="1.15" stroke-linejoin="round"/><rect x="523.6" y="349.2" width="31.100000000000023" height="8.100000000000023" fill="#d3d3d3" stroke="#767676" stroke-width="1.15"/><rect x="523.6" y="349.2" width="16.0" height="8.100000000000023" fill="#fff" stroke="#767676" stroke-width="1.15"/><polygon points="523.6,349.2 527.1,345.7 543.1,345.7 539.6,349.2" fill="#fff" stroke="#767676" stroke-width="1.15"/><line x1="406.6" y1="379.2" x2="406.6" y2="393.6" stroke="#767676" stroke-width="1.15"/><line x1="406.6" y1="393.2" x2="421.7" y2="393.2" stroke="#767676" stroke-width="1.15"/><rect x="409.3" y="383.5" width="2.3000000000000114" height="9.699999999999989" fill="#fff" stroke="#767676" stroke-width="1.15"/><rect x="412.2" y="387.5" width="2.0" height="5.699999999999989" fill="#d3d3d3" stroke="#767676" stroke-width="1.15"/><rect x="415.3" y="385.3" width="2.0" height="7.899999999999977" fill="#fff" stroke="#767676" stroke-width="1.15"/><rect x="417.8" y="380.4" width="2.1999999999999886" height="12.800000000000011" fill="#d3d3d3" stroke="#767676" stroke-width="1.15"/></svg>
<div class="a" style="left:442.8px;top:78px;width:22px;height:22px;border-radius:50%;background:#fff;box-shadow:0 0 2.5px 0.5px rgba(0,0,0,.28)"></div>
<div class="t" style="left:449.10px;top:79px;font-size:21px;color:#ad1414;font-weight:bold">2</div>
<div class="a" style="left:0;top:33px;width:1px;height:429px;background:#217346"></div>
<div class="a" style="left:1px;top:33px;width:859px;height:1px;background:#fbfbfb"></div>
<div class="a" style="left:1px;top:33px;width:1px;height:92px;background:#fbfbfb"></div>
<div class="a" style="left:1px;top:126px;width:1px;height:46px;background:#eeeeee"></div>
</body></html>
